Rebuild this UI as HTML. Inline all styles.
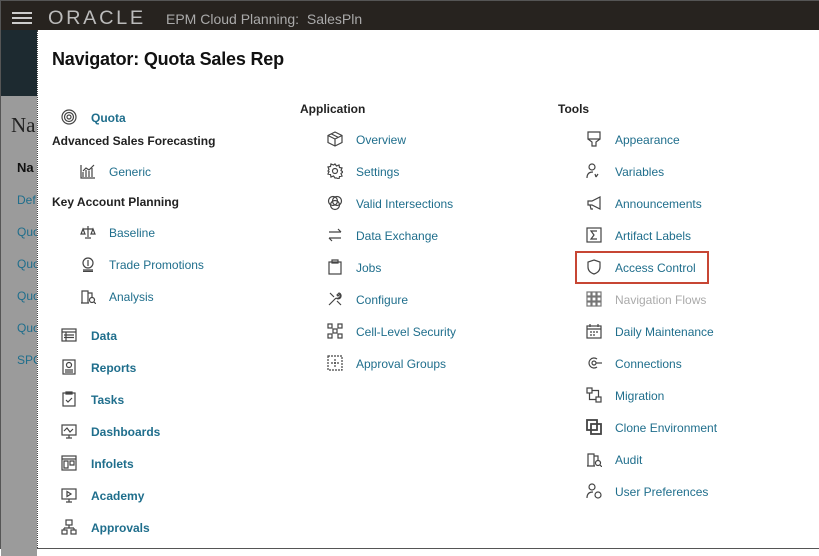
<!DOCTYPE html>
<html><head><meta charset="utf-8"><style>
*{margin:0;padding:0;box-sizing:border-box}
body{width:819px;height:549px;overflow:hidden;position:relative;background:#fff;font-family:"Liberation Sans",sans-serif;border:1px solid #555}
.hdr{position:absolute;left:0;top:0;width:819px;height:29px;background:#27231f}
.ban{position:absolute;left:0;top:29px;width:36px;height:66px;background:#1d2a30}
.gray{position:absolute;left:0;top:95px;width:36px;height:460px;background:#9b9b9b}
.panel{position:absolute;left:36px;top:29px;width:782px;height:518px;background:#fff;border-left:1px dotted #444}
.a{position:absolute;font-size:12px;color:#1f6e8c;white-space:nowrap;line-height:16px}
.b{font-weight:bold}
.h{position:absolute;font-size:12px;color:#222;font-weight:bold;white-space:nowrap;line-height:16px}
.i{position:absolute;width:16px;height:16px}
.i svg{width:16px;height:16px;fill:none;stroke:#444;stroke-width:1.2}
.dis{color:#aaa}
</style></head><body>
<div class="hdr"></div>
<div class="ban"></div>
<div class="gray"></div>
<div style="position:absolute;left:11px;top:11px;width:20px;height:2px;background:#ccc;box-shadow:0 5px 0 #ccc,0 10px 0 #ccc"></div>
<div style="position:absolute;left:47px;top:7px;font-size:19px;color:#bbb;letter-spacing:2.5px;transform:scaleX(1.05);transform-origin:left">ORACLE</div>
<div style="position:absolute;left:165px;top:10px;font-size:14px;color:#aaa">EPM Cloud Planning:&nbsp; SalesPln</div>
<div style="position:absolute;left:10px;top:112px;font-family:'Liberation Serif',serif;font-size:21px;color:#222">Na</div>
<div style="position:absolute;left:16px;top:159px;font-size:13px;font-weight:bold;color:#111">Na</div>
<div style="position:absolute;left:16px;top:183px;font-size:12px;color:#1f6e8c;line-height:32px">Def<br>Quo<br>Quo<br>Quo<br>Quo<br>SPC</div>
<div class="panel"></div>
<div style="position:absolute;left:51px;top:48px;font-size:18px;font-weight:bold;color:#111;letter-spacing:-0.2px">Navigator: Quota Sales Rep</div>

<!-- left column -->
<div class="i" style="left:60px;top:108px"><svg><circle cx="8" cy="8" r="7"/><circle cx="8" cy="8" r="4.5"/><circle cx="8" cy="8" r="2"/></svg></div>
<div class="a b" style="left:90px;top:109px">Quota</div>
<div class="h" style="left:51px;top:132px">Advanced Sales Forecasting</div>
<div class="i" style="left:79px;top:162px"><svg><path d="M1 2v13h14M3 14V9M6 14V7M9 14V8M12 14V5M3 8l3-3 3 2 5-5"/></svg></div>
<div class="a" style="left:108px;top:163px">Generic</div>
<div class="h" style="left:51px;top:193px">Key Account Planning</div>
<div class="i" style="left:79px;top:223px"><svg><path d="M8 2v11M3 5h10M3 5l-2 5h4zM13 5l-2 5h4zM5 14h6"/></svg></div>
<div class="a" style="left:108px;top:224px">Baseline</div>
<div class="i" style="left:79px;top:255px"><svg><circle cx="8" cy="7" r="5"/><path d="M3 14h10M3 15.5h10M8 4v6"/></svg></div>
<div class="a" style="left:108px;top:256px">Trade Promotions</div>
<div class="i" style="left:79px;top:287px"><svg><path d="M2 15V3h6v12M8 5h4v4M1 15h8"/><circle cx="12" cy="12" r="2.5"/><path d="M14 14l2 2"/></svg></div>
<div class="a" style="left:108px;top:288px">Analysis</div>
<div class="i" style="left:60px;top:326px"><svg><rect x="1" y="2" width="14" height="12"/><path d="M1 5h14M3 8h10M3 10.5h10M5 5v9"/></svg></div>
<div class="a b" style="left:90px;top:327px">Data</div>
<div class="i" style="left:60px;top:358px"><svg><rect x="2" y="1" width="12" height="14"/><circle cx="8" cy="6" r="2.5"/><path d="M4 11h8M4 13h8"/></svg></div>
<div class="a b" style="left:90px;top:359px">Reports</div>
<div class="i" style="left:60px;top:390px"><svg><rect x="2" y="2" width="12" height="13"/><path d="M5 1h6v2H5zM5 9l2 2 4-4"/></svg></div>
<div class="a b" style="left:90px;top:391px">Tasks</div>
<div class="i" style="left:60px;top:422px"><svg><rect x="1" y="2" width="14" height="10"/><path d="M8 12v3M5 15h6M3 8l3-3 3 4 3-3"/></svg></div>
<div class="a b" style="left:90px;top:423px">Dashboards</div>
<div class="i" style="left:60px;top:454px"><svg><rect x="1" y="1" width="14" height="14"/><path d="M1 4h14M3 6h4v7H3zM9 6h4v4H9z"/></svg></div>
<div class="a b" style="left:90px;top:455px">Infolets</div>
<div class="i" style="left:60px;top:486px"><svg><rect x="1" y="2" width="14" height="10"/><path d="M8 12v3M5 15h6M6 4.5v5l4-2.5z"/></svg></div>
<div class="a b" style="left:90px;top:487px">Academy</div>
<div class="i" style="left:60px;top:518px"><svg><rect x="5" y="1" width="6" height="5"/><path d="M8 6v3M3 9h10M3 9v2M13 9v2"/><rect x="1" y="11" width="5" height="4"/><rect x="10" y="11" width="5" height="4"/></svg></div>
<div class="a b" style="left:90px;top:519px">Approvals</div>

<!-- middle column -->
<div class="h" style="left:299px;top:100px">Application</div>
<div class="i" style="left:326px;top:130px"><svg><path d="M8 1l7 3.5v7L8 15l-7-3.5v-7zM1 4.5L8 8l7-3.5M8 8v7M4.5 3l7 3.5"/></svg></div>
<div class="a" style="left:355px;top:131px">Overview</div>
<div class="i" style="left:326px;top:162px"><svg><circle cx="8" cy="8" r="2.5"/><path d="M8 1l1.5 2 2.5-1 .5 2.5 2.5.5-1 2.5 2 1.5-2 1.5 1 2.5-2.5.5-.5 2.5-2.5-1L8 15l-1.5-2-2.5 1-.5-2.5L1 11l1-2.5L1 8l1-1.5L1 4l2.5-.5L4 1l2.5 1z"/></svg></div>
<div class="a" style="left:355px;top:163px">Settings</div>
<div class="i" style="left:326px;top:194px"><svg><circle cx="6" cy="6" r="4.5"/><circle cx="10" cy="6" r="4.5"/><circle cx="8" cy="10" r="4.5"/></svg></div>
<div class="a" style="left:355px;top:195px">Valid Intersections</div>
<div class="i" style="left:326px;top:226px"><svg><path d="M2 5h12M11 2l3 3M14 11H2M5 14l-3-3"/></svg></div>
<div class="a" style="left:355px;top:227px">Data Exchange</div>
<div class="i" style="left:326px;top:258px"><svg><rect x="2" y="3" width="12" height="12"/><path d="M5 1h6v3H5z"/></svg></div>
<div class="a" style="left:355px;top:259px">Jobs</div>
<div class="i" style="left:326px;top:290px"><svg><path d="M2 14l7-7M9 7a3 3 0 1 0 3-5L10 4l1 1 2-2a3 3 0 0 1-4 4M3 2l4 4M10 10l4 4"/></svg></div>
<div class="a" style="left:355px;top:291px">Configure</div>
<div class="i" style="left:326px;top:322px"><svg><rect x="1" y="1" width="4" height="4"/><rect x="11" y="1" width="4" height="4"/><rect x="1" y="11" width="4" height="4"/><rect x="11" y="11" width="4" height="4"/><rect x="6" y="6" width="4" height="4"/></svg></div>
<div class="a" style="left:355px;top:323px">Cell-Level Security</div>
<div class="i" style="left:326px;top:354px"><svg style="stroke-dasharray:2 1"><rect x="1" y="1" width="14" height="14"/><path d="M4 8h8M8 4v8"/></svg></div>
<div class="a" style="left:355px;top:355px">Approval Groups</div>

<!-- right column -->
<div class="h" style="left:557px;top:100px">Tools</div>
<div class="i" style="left:585px;top:130px"><svg><path d="M2 1h12v7H2zM2 8l4 3v4h4v-4l4-3"/></svg></div>
<div class="a" style="left:614px;top:131px">Appearance</div>
<div class="i" style="left:585px;top:162px"><svg><circle cx="6" cy="4" r="3"/><path d="M1 15c0-5 3-6 6-6M9 11l1 3M12 11l-2 3"/></svg></div>
<div class="a" style="left:614px;top:163px">Variables</div>
<div class="i" style="left:585px;top:194px"><svg><path d="M2 6h4l8-4v12l-8-4H2zM4 10l1 4h2"/></svg></div>
<div class="a" style="left:614px;top:195px">Announcements</div>
<div class="i" style="left:585px;top:226px"><svg><rect x="1" y="1" width="14" height="14"/><path d="M11 4H5l3 4-3 4h6"/></svg></div>
<div class="a" style="left:614px;top:227px">Artifact Labels</div>
<div style="position:absolute;left:574px;top:250px;width:134px;height:33px;border:2px solid #c74634"></div>
<div class="i" style="left:585px;top:258px"><svg><path d="M8 1l6 2v5c0 4-3 6-6 7-3-1-6-3-6-7V3z"/></svg></div>
<div class="a" style="left:614px;top:259px">Access Control</div>
<div class="i" style="left:585px;top:290px"><svg style="stroke:#777"><rect x="1" y="1" width="4" height="4"/><rect x="6" y="1" width="4" height="4"/><rect x="11" y="1" width="4" height="4"/><rect x="1" y="6" width="4" height="4"/><rect x="6" y="6" width="4" height="4"/><rect x="11" y="6" width="4" height="4"/><rect x="1" y="11" width="4" height="4"/><rect x="6" y="11" width="4" height="4"/><rect x="11" y="11" width="4" height="4"/></svg></div>
<div class="a dis" style="left:614px;top:291px">Navigation Flows</div>
<div class="i" style="left:585px;top:322px"><svg><rect x="1" y="3" width="14" height="12"/><path d="M1 6h14M4 1v3M12 1v3M4 9h2M7 9h2M10 9h2M4 12h2M7 12h2"/></svg></div>
<div class="a" style="left:614px;top:323px">Daily Maintenance</div>
<div class="i" style="left:585px;top:354px"><svg><path d="M11 4a5 5 0 1 0 0 8"/><circle cx="8" cy="8" r="2"/><path d="M10 8h6"/></svg></div>
<div class="a" style="left:614px;top:355px">Connections</div>
<div class="i" style="left:585px;top:386px"><svg><rect x="1" y="1" width="5" height="5"/><rect x="10" y="10" width="5" height="5"/><path d="M3.5 6v6.5H10M12.5 10V3.5H6"/></svg></div>
<div class="a" style="left:614px;top:387px">Migration</div>
<div class="i" style="left:585px;top:418px"><svg style="stroke-width:1.8"><rect x="1" y="1" width="10" height="10"/><rect x="5" y="5" width="10" height="10"/></svg></div>
<div class="a" style="left:614px;top:419px">Clone Environment</div>
<div class="i" style="left:585px;top:450px"><svg><path d="M2 15V3h6v12M8 5h4v4M1 15h8"/><circle cx="12" cy="12" r="2.5"/><path d="M14 14l2 2"/></svg></div>
<div class="a" style="left:614px;top:451px">Audit</div>
<div class="i" style="left:585px;top:482px"><svg><circle cx="6" cy="4" r="3"/><path d="M1 15c0-5 3-6 6-6"/><circle cx="12" cy="12" r="3"/></svg></div>
<div class="a" style="left:614px;top:483px">User Preferences</div>
</body></html>
